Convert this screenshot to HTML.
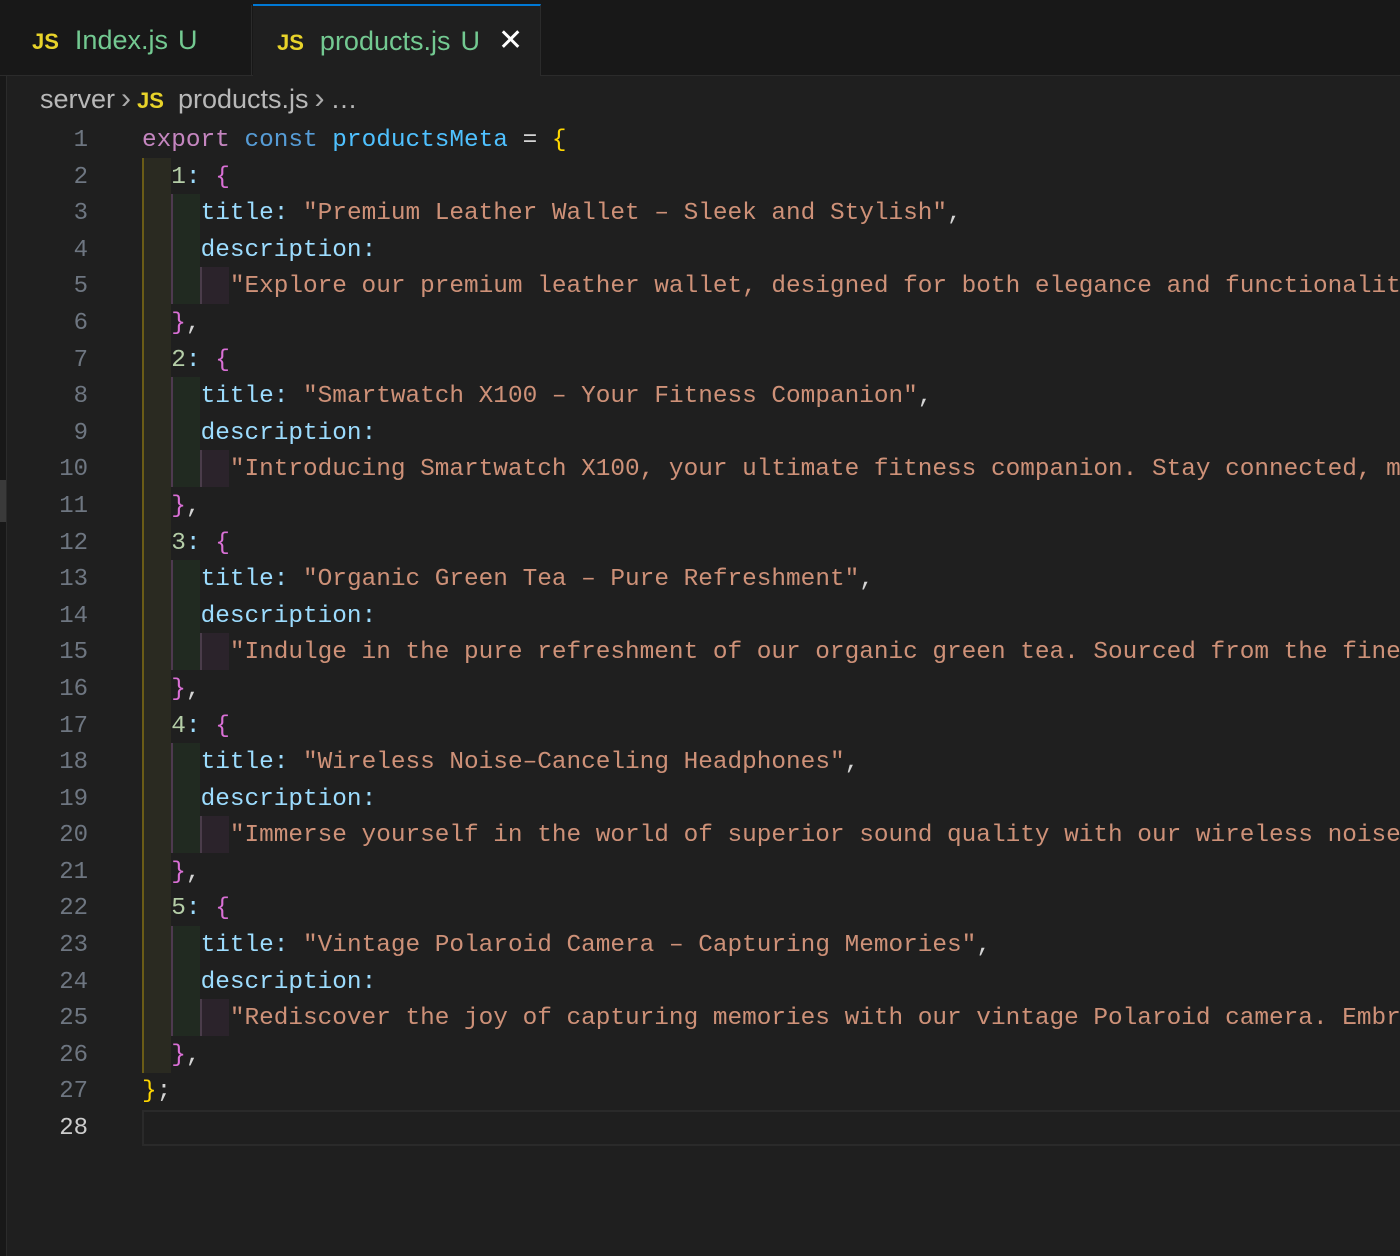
<!DOCTYPE html>
<html><head><meta charset="utf-8"><style>
html,body{margin:0;padding:0;background:#1f1f1f;width:1400px;height:1256px;overflow:hidden;position:relative;font-family:"Liberation Sans",sans-serif}
.top{position:absolute;left:0;top:0;width:1400px;height:5px;background:#181818}
.tabbar{position:absolute;left:0;top:5px;width:1400px;height:70px;background:#181818;border-bottom:1px solid #2b2b2b}
.tab{position:absolute;top:0;height:70px;font-size:27px;line-height:70px;white-space:nowrap}
.js{color:#e8d32a;font-weight:bold;font-size:22px;margin-right:16px}
.nm{color:#73c991}
.u{color:#73c991;margin-left:10px}
.crumb{position:absolute;left:40px;top:80px;font-size:27px;line-height:38px;color:#b8b8b8;white-space:nowrap}
.ch{color:#aaa;font-size:30px;margin:0 6px}
.ln{position:absolute;left:0;width:88px;text-align:right;font-family:"Liberation Mono",monospace;font-size:24px;line-height:36.6px;color:#6e7681}
.code{position:absolute;left:142px;width:1258px;overflow:hidden;font-family:"Liberation Mono",monospace;font-size:24.4px;line-height:36.6px;white-space:pre;color:#d4d4d4}
.k{color:#c586c0}.c{color:#569cd6}.v{color:#4fc1ff}.y{color:#ffd700}.p{color:#9cdcfe}.s{color:#ce9178}.n{color:#b5cea8}.b{color:#da70d6}
.g1{position:absolute;left:142px;width:27px;background:#2a2a21;border-left:2px solid #6a5c16}
.g2{position:absolute;left:171px;width:27px;background:#212a21;border-left:2px solid #4e3a50}
.g3{position:absolute;left:200px;width:27px;background:#2b232b;border-left:2px solid #4a3c4a}
</style></head><body>
<div class="top"></div>
<div style="position:absolute;left:0;top:75px;width:6px;height:1181px;background:#181818;border-right:1px solid #2b2b2b"></div>
<div style="position:absolute;left:0;top:480px;width:6px;height:42px;background:#3a3a3a"></div>
<div class="tabbar">
 <div class="tab" style="left:6px;width:246px;border-right:1px solid #2b2b2b;padding-left:26px;box-sizing:border-box"><span class="js">JS</span><span class="nm">Index.js</span><span class="u">U</span></div>
 <div class="tab" style="left:253px;width:288px;background:#1f1f1f;border-top:2px solid #0078d4;top:-1px;height:72px;border-right:1px solid #2b2b2b;padding-left:24px;box-sizing:border-box"><span class="js">JS</span><span class="nm">products.js</span><span class="u">U</span><span style="color:#fff;margin-left:18px;font-size:30px">✕</span></div>
</div>
<div class="crumb">server<span class="ch">›</span><span class="js" style="margin:0 14px 0 0">JS</span>products.js<span class="ch">›</span>…</div>

<div class="g1" style="top:157.6px;height:915px"></div>
<div class="g2" style="top:194px;height:110px"></div>
<div class="g2" style="top:377px;height:110px"></div>
<div class="g2" style="top:560px;height:110px"></div>
<div class="g2" style="top:743px;height:110px"></div>
<div class="g2" style="top:926px;height:110px"></div>
<div class="g3" style="top:267.4px;height:36.6px"></div>
<div class="g3" style="top:450.4px;height:36.6px"></div>
<div class="g3" style="top:633.4px;height:36.6px"></div>
<div class="g3" style="top:816.4px;height:36.6px"></div>
<div class="g3" style="top:999.4px;height:36.6px"></div>
<div style="position:absolute;left:142px;top:1110px;width:1270px;height:32px;border:2px solid #2a2a2a"></div>

<div class="ln" style="top:123px">1<br>2<br>3<br>4<br>5<br>6<br>7<br>8<br>9<br>10<br>11<br>12<br>13<br>14<br>15<br>16<br>17<br>18<br>19<br>20<br>21<br>22<br>23<br>24<br>25<br>26<br>27<br><span style="color:#ccc">28</span></div>

<div class="code" style="top:123px"><span class="k">export</span> <span class="c">const</span> <span class="v">productsMeta</span> = <span class="y">{</span>
  <span class="n">1</span><span class="p">:</span> <span class="b">{</span>
    <span class="p">title:</span> <span class="s">"Premium Leather Wallet – Sleek and Stylish"</span>,
    <span class="p">description:</span>
      <span class="s">"Explore our premium leather wallet, designed for both elegance and functionality."</span>
  <span class="b">}</span>,
  <span class="n">2</span><span class="p">:</span> <span class="b">{</span>
    <span class="p">title:</span> <span class="s">"Smartwatch X100 – Your Fitness Companion"</span>,
    <span class="p">description:</span>
      <span class="s">"Introducing Smartwatch X100, your ultimate fitness companion. Stay connected, motivated"</span>
  <span class="b">}</span>,
  <span class="n">3</span><span class="p">:</span> <span class="b">{</span>
    <span class="p">title:</span> <span class="s">"Organic Green Tea – Pure Refreshment"</span>,
    <span class="p">description:</span>
      <span class="s">"Indulge in the pure refreshment of our organic green tea. Sourced from the finest"</span>
  <span class="b">}</span>,
  <span class="n">4</span><span class="p">:</span> <span class="b">{</span>
    <span class="p">title:</span> <span class="s">"Wireless Noise–Canceling Headphones"</span>,
    <span class="p">description:</span>
      <span class="s">"Immerse yourself in the world of superior sound quality with our wireless noise"</span>
  <span class="b">}</span>,
  <span class="n">5</span><span class="p">:</span> <span class="b">{</span>
    <span class="p">title:</span> <span class="s">"Vintage Polaroid Camera – Capturing Memories"</span>,
    <span class="p">description:</span>
      <span class="s">"Rediscover the joy of capturing memories with our vintage Polaroid camera. Embrace"</span>
  <span class="b">}</span>,
<span class="y">}</span>;
</div>
</body></html>
